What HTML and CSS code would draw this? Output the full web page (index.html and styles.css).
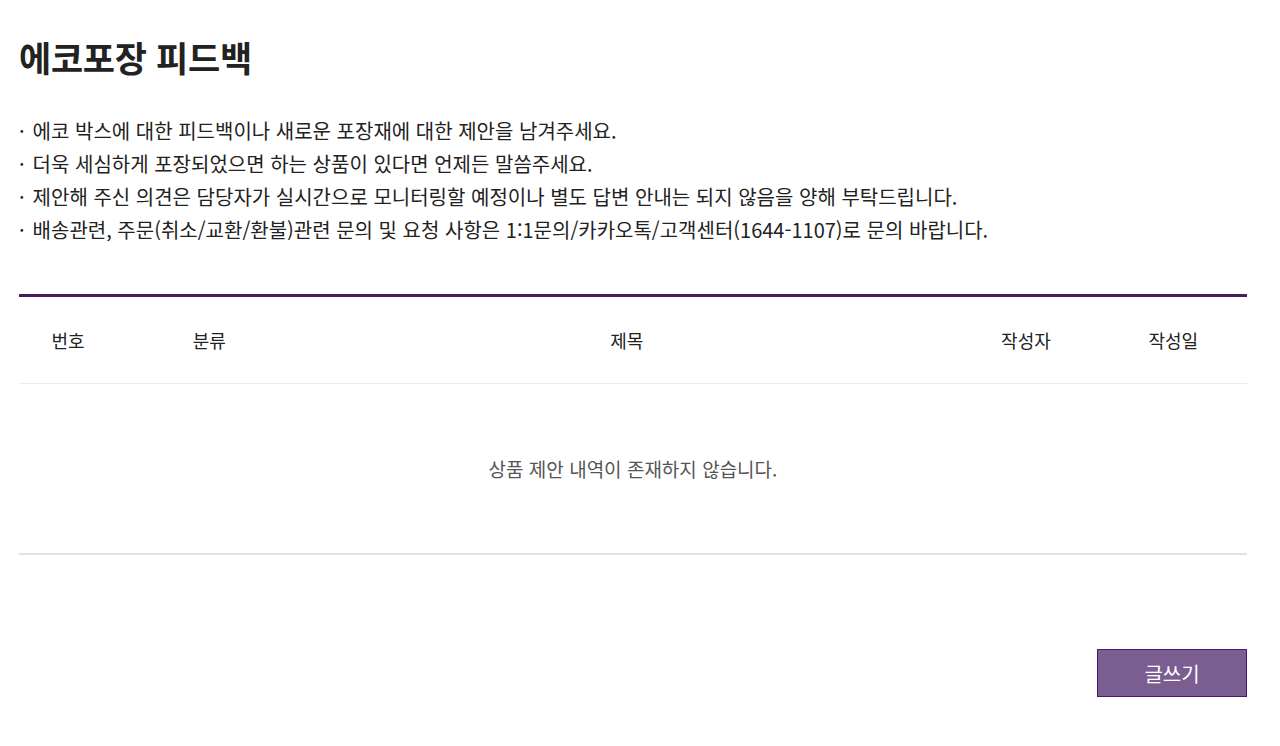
FILE: index.html
```html
<!DOCTYPE html>
<html lang="ko">
<head>
    <meta charset="UTF-8" />
    <meta name="viewport" content="width=device-width, initial-scale=1.0">
    <title>에코포장 피드백</title>
    <link rel="stylesheet" href="styles.css">
</head>
<body>
    <div class="container">
        <h1>에코포장 피드백</h1>

        <ul class="notice">
            <li>에코 박스에 대한 피드백이나 새로운 포장재에 대한 제안을 남겨주세요.</li>
            <li>더욱 세심하게 포장되었으면 하는 상품이 있다면 언제든 말씀주세요.</li>
            <li>제안해 주신 의견은 담당자가 실시간으로 모니터링할 예정이나 별도 답변 안내는 되지 않음을 양해 부탁드립니다.</li>
            <li>배송관련, 주문(취소/교환/환불)관련 문의 및 요청 사항은 1:1문의/카카오톡/고객센터(1644-1107)로 문의 바랍니다.</li>
        </ul>

        <table class="board">
            <colgroup>
                <col class="col-no">
                <col class="col-type">
                <col>
                <col class="col-writer">
                <col class="col-date">
            </colgroup>
            <thead>
                <tr>
                    <th>번호</th>
                    <th>분류</th>
                    <th>제목</th>
                    <th>작성자</th>
                    <th>작성일</th>
                </tr>
            </thead>
            <tbody>
                <tr>
                    <td colspan="5" class="empty">상품 제안 내역이 존재하지 않습니다.</td>
                </tr>
            </tbody>
        </table>

        <div class="actions">
            <button type="button" class="btn-write">글쓰기</button>
        </div>
    </div>
</body>
</html>
```

FILE: styles.css
```css
body {
    margin: 0;
    font-family: "Noto Sans CJK KR", "Noto Sans", sans-serif;
    color: #222;
    background-color: #fff;
}

.container {
    padding: 30px 33px 0 19px;
}

h1 {
    margin: 0;
    font-size: 35px;
    font-weight: 700;
    line-height: 54px;
    color: #222;
    letter-spacing: -0.3px;
}

.notice {
    list-style: none;
    margin: 30px 0 0;
    padding: 0;
}

.notice li {
    font-size: 20px;
    line-height: 33px;
    color: #222;
}

.notice li::before {
    content: "·";
    margin-right: 8px;
}

.board {
    width: 100%;
    margin-top: 48px;
    border-collapse: collapse;
    border-top: 3px solid #4a1d5e;
    border-bottom: 2px solid #e2e2e2;
}

.col-no { width: 8%; }
.col-type { width: 15%; }
.col-writer { width: 12%; }
.col-date { width: 12%; }

.board th {
    height: 86px;
    font-size: 18px;
    font-weight: 400;
    color: #222;
    text-align: center;
    border-bottom: 1px solid #ececec;
    padding: 0;
}

.board .empty {
    height: 169px;
    padding: 0;
    text-align: center;
    font-size: 19px;
    color: #555;
}

.actions {
    display: flex;
    justify-content: flex-end;
    margin-top: 94px;
}

.btn-write {
    width: 150px;
    height: 48px;
    background-color: #7b5e91;
    border: 1px solid #4b1b6b;
    color: #fff;
    font-family: inherit;
    font-size: 20px;
    cursor: pointer;
}

.btn-write:hover {
    background-color: #6e5084;
}
```
